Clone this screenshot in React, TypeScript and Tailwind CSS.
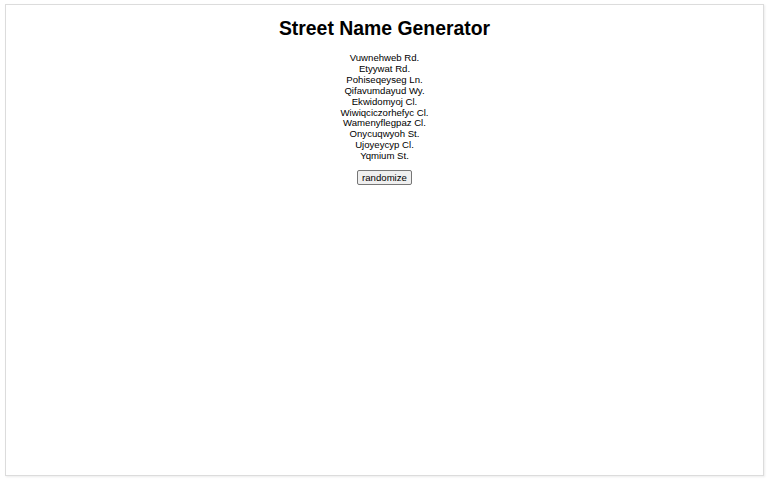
const streets = [
  "Vuwnehweb Rd.",
  "Etyywat Rd.",
  "Pohiseqeyseg Ln.",
  "Qifavumdayud Wy.",
  "Ekwidomyoj Cl.",
  "Wiwiqciczorhefyc Cl.",
  "Wamenyflegpaz Cl.",
  "Onycuqwyoh St.",
  "Ujoyeycyp Cl.",
  "Yqmium St.",
];

export default function App() {
  return (
    <div className="w-[768px] h-[480px] bg-white pt-[4px] pl-[5px] pr-[4px] pb-[4px] font-['Liberation_Sans',Arial,sans-serif] text-black">
      <div className="h-[472px] w-[759px] border border-[#dcdcdc] shadow-[1px_1px_2px_rgba(0,0,0,0.08)] flex flex-col items-center">
        <h1 className="mt-[12px] text-[19.4px] leading-[22px] font-bold">Street Name Generator</h1>
        <div className="mt-[14px] flex flex-col items-center text-[9.6px] leading-[10.9px]">
          {streets.map((s) => (
            <div key={s}>{s}</div>
          ))}
        </div>
        <button className="mt-[8px] px-[4px] h-[15px] text-[9.6px] leading-[12px] bg-[#efefef] border border-[#767676] rounded-[2px]">
          randomize
        </button>
      </div>
    </div>
  );
}
